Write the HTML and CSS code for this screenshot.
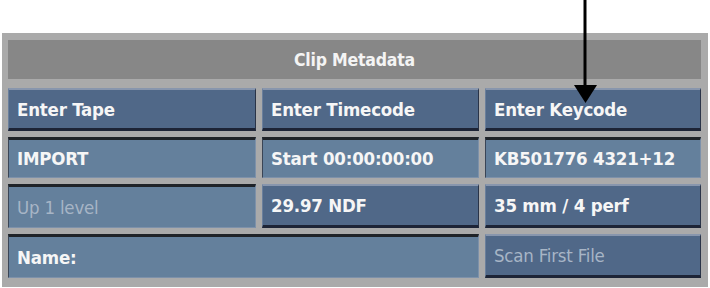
FILE: index.html
```html
<!DOCTYPE html>
<html lang="en">
<head>
    <meta charset="UTF-8">
    <title>Clip Metadata</title>
    <link rel="stylesheet" href="styles.css">
</head>
<body>
    <div class="stage">
        <div class="panel">
            <div class="title">Clip Metadata</div>
            <div class="grid">
                <div class="cell button">Enter Tape</div>
                <div class="cell button">Enter Timecode</div>
                <div class="cell button">Enter Keycode</div>

                <div class="cell field">IMPORT</div>
                <div class="cell field">Start 00:00:00:00</div>
                <div class="cell field">KB501776 4321+12</div>

                <div class="cell field dim">Up 1 level</div>
                <div class="cell button">29.97 NDF</div>
                <div class="cell button">35 mm / 4 perf</div>

                <div class="cell field wide">Name:</div>
                <div class="cell button dim">Scan First File</div>
            </div>
        </div>

        <!-- callout arrow pointing at Enter Keycode -->
        <svg class="arrow" width="30" height="104" viewBox="0 0 30 104">
            <line x1="15" y1="0" x2="15" y2="88" stroke="#000" stroke-width="3"/>
            <polygon points="4,85 27,85 15.5,103" fill="#000"/>
        </svg>
    </div>
</body>
</html>
```

FILE: styles.css
```css
body {
    margin: 0;
    background: #fff;
    font-family: "DejaVu Sans Condensed", "DejaVu Sans", sans-serif;
}

.stage {
    position: relative;
    width: 710px;
    height: 288px;
}

.panel {
    position: relative;
    top: 33px;
    margin-left: 2px;
    width: 706px;
    height: 254px;
    box-sizing: border-box;
    padding: 7px 7px 9px 6px;
    background: #aaaaaa;
}

.title {
    height: 39px;
    margin-bottom: 9px;
    background: #878787;
    color: #f4f4f4;
    font-size: 17.5px;
    font-weight: bold;
    letter-spacing: -0.2px;
    display: flex;
    align-items: center;
    justify-content: center;
}

.grid {
    display: grid;
    grid-template-columns: 248px 217px 216px;
    grid-template-rows: 43px 41px 44px 44px;
    gap: 6px;
}

.cell {
    box-sizing: border-box;
    display: flex;
    align-items: center;
    padding-left: 8px;
    color: #f6f6f6;
    font-size: 18.5px;
    font-weight: bold;
    letter-spacing: -0.2px;
}

.button {
    background: #506888;
    border-top: 2px solid #8896ad;
    border-left: 1px solid #6a7f9c;
    border-bottom: 3px solid #1d2436;
    border-right: 1px solid #2a3448;
}

.field {
    background: #64809c;
    border-top: 3px solid #1f2328;
    border-left: 1px solid #3a4556;
    border-bottom: 1px solid #7d91aa;
    border-right: 1px solid #7d91aa;
}

.wide {
    grid-column: span 2;
}

.dim {
    color: #a7b5c6;
    font-weight: normal;
}

.arrow {
    position: absolute;
    left: 570px;
    top: 0;
}
```
